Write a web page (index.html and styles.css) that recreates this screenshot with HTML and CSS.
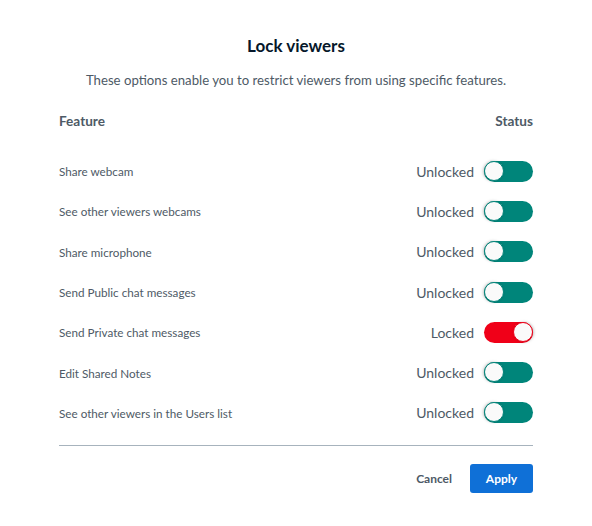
FILE: index.html
```html
<!DOCTYPE html>
<html>
<head>
<meta charset="utf-8">
<link rel="stylesheet" href="styles.css">
</head>
<body>
<div class="modal">
  <h1 class="title">Lock viewers</h1>
  <p class="desc">These options enable you to restrict viewers from using specific features.</p>
  <div class="head">
    <span>Feature</span>
    <span>Status</span>
  </div>
  <div class="rows">
    <div class="row"><span class="label">Share webcam</span><div class="status"><span class="state">Unlocked</span><span class="toggle"><span class="thumb"></span></span></div></div>
    <div class="row"><span class="label">See other viewers webcams</span><div class="status"><span class="state">Unlocked</span><span class="toggle"><span class="thumb"></span></span></div></div>
    <div class="row"><span class="label">Share microphone</span><div class="status"><span class="state">Unlocked</span><span class="toggle"><span class="thumb"></span></span></div></div>
    <div class="row"><span class="label">Send Public chat messages</span><div class="status"><span class="state">Unlocked</span><span class="toggle"><span class="thumb"></span></span></div></div>
    <div class="row"><span class="label">Send Private chat messages</span><div class="status"><span class="state">Locked</span><span class="toggle on"><span class="thumb"></span></span></div></div>
    <div class="row"><span class="label">Edit Shared Notes</span><div class="status"><span class="state">Unlocked</span><span class="toggle"><span class="thumb"></span></span></div></div>
    <div class="row"><span class="label">See other viewers in the Users list</span><div class="status"><span class="state">Unlocked</span><span class="toggle"><span class="thumb"></span></span></div></div>
  </div>
  <div class="footer">
    <button class="btn cancel">Cancel</button>
    <button class="btn apply">Apply</button>
  </div>
</div>
</body>
</html>
```
FILE: styles.css
```css
html, body {
  margin: 0;
  padding: 0;
  background: #ffffff;
}
body {
  font-family: "Lato", "Source Sans Pro", sans-serif;
  color: #4e5a66;
}
.modal {
  width: 474px;
  margin: 0 auto;
  padding-top: 34px;
}
.title {
  margin: 0;
  text-align: center;
  font-size: 17px;
  font-weight: 700;
  color: #06172a;
  line-height: 24px;
}
.desc {
  margin: 12px 0 0;
  text-align: center;
  font-size: 13.2px;
  line-height: 20px;
  color: #4e5a66;
}
.head {
  display: flex;
  justify-content: space-between;
  margin-top: 21px;
  font-size: 13.6px;
  font-weight: 700;
  line-height: 20px;
  color: #4e5a66;
}
.rows {
  margin-top: 20px;
  padding-bottom: 12px;
  border-bottom: 1px solid #a7b3bd;
}
.row {
  display: flex;
  justify-content: space-between;
  align-items: center;
  height: 40.3px;
}
.label {
  font-size: 11.7px;
  color: #4e5a66;
}
.status {
  display: flex;
  align-items: center;
  gap: 10px;
}
.state {
  font-size: 14px;
  color: #4e5a66;
}
.toggle {
  position: relative;
  display: block;
  width: 49px;
  height: 21px;
  border-radius: 11px;
  background: #00857a;
}
.toggle.on {
  background: #f00018;
}
.thumb {
  position: absolute;
  top: 0;
  left: 0;
  width: 18px;
  height: 18px;
  border-radius: 50%;
  background: #fafafa;
  border: 1.5px solid #00857a;
  box-shadow: -1px 0 3px rgba(0, 0, 0, 0.25);
}
.toggle.on .thumb {
  left: auto;
  right: 0;
  border-color: #f00018;
  box-shadow: 1px 0 3px rgba(0, 0, 0, 0.25);
}
.footer {
  display: flex;
  justify-content: flex-end;
  align-items: center;
  gap: 18px;
  margin-top: 18px;
}
.btn {
  font-family: inherit;
  font-size: 12px;
  font-weight: 700;
  border: none;
  cursor: pointer;
}
.cancel {
  background: transparent;
  color: #4e5a66;
  padding: 0;
}
.apply {
  width: 63px;
  height: 29px;
  background: #0f70d7;
  color: #ffffff;
  border-radius: 3px;
}
```
